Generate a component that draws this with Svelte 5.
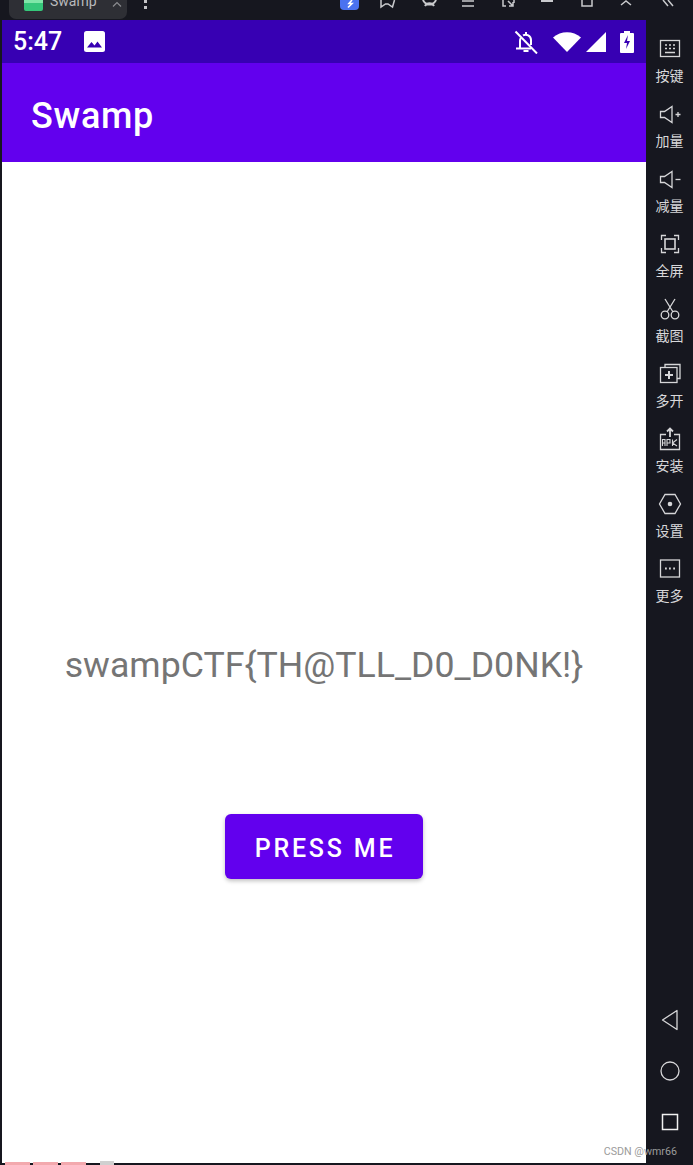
<script>
  const tools = [
    { label: '按键', icon: 'keys' },
    { label: '加量', icon: 'volup' },
    { label: '减量', icon: 'voldown' },
    { label: '全屏', icon: 'full' },
    { label: '截图', icon: 'cut' },
    { label: '多开', icon: 'multi' },
    { label: '安装', icon: 'apk' },
    { label: '设置', icon: 'gear' },
    { label: '更多', icon: 'more' }
  ];
</script>

<div class="emulator">
  <header class="titlebar">
    <div class="tab">
      <span class="tab-icon"></span>
      <span class="tab-name">Swamp</span>
      <svg class="tab-caret" width="10" height="6" viewBox="0 0 10 6"><path d="M1 5.5 5 1.5l4 4" fill="none" stroke="#8b8c90" stroke-width="1.2" /></svg>
    </div>
    <div class="kebab"><i></i><i></i></div>
    <svg class="window-controls" width="353" height="19" viewBox="340 0 353 19" fill="none" stroke="#c9cacd" stroke-width="1.5">
      <path d="M340 0h19v6a4 4 0 0 1-4 4h-11a4 4 0 0 1-4-4z" fill="#4a72f0" stroke="none" />
      <path d="M352 0l-3 3.500h3l-4 4" stroke="#fff" stroke-width="1.600" />
      <path d="M381 0v7l4.500-3h2.500l4.500 3 2-7" />
      <path d="M423 0a7 7 0 0 0 13 0M425 6a5 5 0 0 1 9 0" stroke-width="2" />
      <path d="M462 1h12M462 6h12" stroke-width="1.6" />
      <path d="M503 0v6h3M514 0v3M508 1l5 5M513 2v4h-4" />
      <path d="M541 1h12" stroke-width="2" />
      <path d="M582 0v6h10V0" />
      <path d="M621 5l5-4 5 4" />
      <path d="M668 0l5 6M663 0l5 6" />
    </svg>
  </header>

  <div class="body">
    <main class="phone">
      <div class="statusbar">
        <span class="clock">5:47</span>
        <svg class="pic" width="21" height="21" viewBox="0 0 21 21">
          <rect width="21" height="21" rx="2.5" fill="#fff" />
          <path d="M3 16.5 7.5 11l3 3.5 3-4 4.5 6z" fill="#3700b3" />
        </svg>
        <div class="sys-icons">
          <svg width="24" height="24" viewBox="0 0 24 24" fill="none" stroke="#fff" stroke-width="2">
            <path d="M2 18.500h15M6 18v-7a5 5 0 0 1 .800-3M9 5.300A5.500 5.500 0 0 1 17 10v5" />
            <path d="M9.500 21h5M12 2v2" />
            <path d="M1.500 1.500 23 23.500" />
          </svg>
          <svg class="wifi" width="28" height="20" viewBox="0 0 28 20"><path d="M0 5.500C8-1.500 20-1.500 28 5.500L14 20z" fill="#fff" /></svg>
          <svg class="cell" width="21" height="20" viewBox="0 0 21 20"><path d="M0 20 20 0v20z" fill="#fff" /></svg>
          <svg class="batt" width="14" height="22" viewBox="0 0 14 22">
            <path d="M4 0h6v2h3a1 1 0 0 1 1 1v18a1 1 0 0 1-1 1H1a1 1 0 0 1-1-1V3a1 1 0 0 1 1-1h3z" fill="#fff" />
            <path d="M8 4 4 12h3l-1 6 4-8H7z" fill="#3700b3" />
          </svg>
        </div>
      </div>

      <div class="appbar">Swamp</div>

      <div class="content">
        <p class="flag">swampCTF&#123;TH@TLL_D0_D0NK!&#125;</p>
        <button class="press" type="button">PRESS ME</button>
      </div>
    </main>

    <aside class="sidebar">
      <ul class="tools">
        {#each tools as tool}
          <li>
            <svg width="26" height="26" viewBox="0 0 26 26" fill="none" stroke="#d6d6d8" stroke-width="1.3">
              {#if tool.icon === 'keys'}
                <rect x="3.500" y="4.500" width="19" height="16" />
                <path d="M8 9h2M12 9h2M16 9h2M8 12.500h2M12 12.500h2M16 12.500h2M8 16.500h10" />
              {:else if tool.icon === 'volup'}
                <path d="M3.500 10.500v6h4l7.500 5V5.500l-7.500 5z" />
                <path d="M18.500 13.500h5M21 11v5" />
              {:else if tool.icon === 'voldown'}
                <path d="M3.500 10.500v6h4l7.500 5V5.500l-7.500 5z" />
                <path d="M18.500 13.500h5" />
              {:else if tool.icon === 'full'}
                <path d="M4.500 9V4.500H9M17 4.500h4.500V9M21.500 17v4.500H17M9 21.500H4.500V17" />
                <rect x="8" y="8" width="10" height="10" stroke-width="1.600" />
              {:else if tool.icon === 'cut'}
                <circle cx="8" cy="19" r="3.800" />
                <circle cx="18" cy="19" r="3.800" />
                <path d="M10 16 18 3M16 16 8 3" />
              {:else if tool.icon === 'multi'}
                <path d="M8 6.500V3.500h15v14h-3" />
                <rect x="3.500" y="6.500" width="16.500" height="15" />
                <path d="M8 14h8M12 10v8" stroke-width="2" />
              {:else if tool.icon === 'apk'}
                <path d="M9 8.500H3.500v15h19v-15H17" />
                <path d="M13 11V2.500M10 5.500l3-3 3 3" stroke-width="1.800" />
                <path d="M5.500 20v-6.500h2.500V20M5.500 17h2.500M10 20v-6.500h3v3.500h-3M15.500 13.500V20M20 13.500l-4.500 3.500 4.500 3" stroke-width="1.100" />
              {:else if tool.icon === 'gear'}
                <path d="M8 3.500h10l5.500 9.500L18 22.500H8L2.500 13z" />
                <circle cx="13" cy="13" r="2.300" fill="#d6d6d8" stroke="none" />
              {:else}
                <rect x="3.500" y="4" width="19" height="17" />
                <path d="M8 12.500h1.800M12 12.500h1.800M16.200 12.500H18" stroke-width="1.800" />
              {/if}
            </svg>
            <span>{tool.label}</span>
          </li>
        {/each}
      </ul>

      <nav class="softkeys">
        <svg width="20" height="22" viewBox="0 0 20 22" fill="none" stroke="#d6d6d8" stroke-width="1.300"><path d="M17 1.500v19L2.500 11z" stroke-linejoin="round" /></svg>
        <svg width="20" height="22" viewBox="0 0 20 22" fill="none" stroke="#d6d6d8" stroke-width="1.300"><circle cx="10" cy="11" r="9" /></svg>
        <svg width="20" height="22" viewBox="0 0 20 22" fill="none" stroke="#f0f0f0" stroke-width="1.500"><rect x="2.500" y="3.500" width="15" height="15" /></svg>
      </nav>
    </aside>
  </div>

  <div class="taskbar-scrap"><i></i><i></i><i></i><b></b></div>
  <span class="watermark">CSDN @wmr66</span>
</div>

<style>
  :global(body) {
    margin: 0;
    background: #16171f;
  }

  .emulator {
    position: relative;
    width: 693px;
    height: 1165px;
    overflow: hidden;
    display: flex;
    flex-direction: column;
    background: #16171f;
    font-family: Roboto, "Liberation Sans", sans-serif;
  }

  .titlebar {
    height: 20px;
    flex: none;
    display: flex;
    align-items: flex-start;
    overflow: hidden;
  }

  .tab {
    width: 120px;
    height: 19px;
    margin-left: 9px;
    padding-left: 15px;
    box-sizing: border-box;
    display: flex;
    gap: 7px;
    background: #2e2f35;
    border-radius: 0 0 7px 7px;
    overflow: hidden;
  }

  .tab-icon {
    width: 19px;
    height: 11px;
    flex: none;
    border-radius: 0 0 2px 2px;
    background: linear-gradient(#7fe6a8 0 3px, #35c77a 3px);
  }

  .tab-name {
    margin-top: -8px;
    font-size: 14px;
    line-height: 18px;
    color: #b9babd;
  }

  .tab-caret {
    margin: 1px 0 0 8px;
  }

  .kebab {
    width: 3px;
    margin-left: 17px;
    display: flex;
    flex-direction: column;
    gap: 3px;
  }

  .kebab i {
    width: 3px;
    height: 3px;
    background: #c4c4c6;
  }

  .window-controls {
    margin-left: 193px;
    flex: none;
  }

  .body {
    flex: 1;
    min-height: 0;
    display: flex;
    padding: 0 0 2px 2px;
  }

  .phone {
    width: 644px;
    flex: none;
    display: flex;
    flex-direction: column;
    background: #fff;
  }

  .statusbar {
    height: 43px;
    flex: none;
    display: flex;
    align-items: center;
    padding: 0 12px 0 11px;
    box-sizing: border-box;
    background: #3700b3;
    color: #fff;
  }

  .clock {
    font-size: 25px;
    font-weight: 500;
    line-height: 1;
  }

  .pic {
    margin-left: 22px;
  }

  .sys-icons {
    margin-left: auto;
    display: flex;
    align-items: center;
  }

  .wifi {
    margin-left: 15px;
  }

  .cell {
    margin-left: 5px;
  }

  .batt {
    margin-left: 13px;
  }

  .appbar {
    height: 99px;
    flex: none;
    display: flex;
    align-items: center;
    padding: 7px 0 0 29px;
    box-sizing: border-box;
    background: #6200ee;
    color: #fff;
    font-size: 36px;
    font-weight: 500;
    letter-spacing: 0.7px;
  }

  .content {
    flex: 1;
    display: flex;
    flex-direction: column;
    align-items: center;
    padding-top: 481px;
  }

  .flag {
    margin: 0;
    font-size: 35.7px;
    line-height: 44px;
    color: #757575;
    white-space: nowrap;
  }

  .press {
    width: 198px;
    height: 65px;
    margin-top: 127px;
    padding: 3px 0 0 2px;
    border: none;
    border-radius: 6px;
    background: #6200ee;
    color: #fff;
    font-family: inherit;
    font-size: 25px;
    font-weight: 500;
    letter-spacing: 2.8px;
    box-shadow: 0 2px 4px rgba(0, 0, 0, 0.25);
  }

  .sidebar {
    flex: 1;
    display: flex;
    flex-direction: column;
    align-items: center;
  }

  .tools {
    list-style: none;
    margin: 16px 0 0;
    padding: 0;
    display: flex;
    flex-direction: column;
    gap: 12px;
  }

  .tools li {
    display: flex;
    flex-direction: column;
    align-items: center;
    height: 53px;
  }

  .tools span {
    margin-top: 4px;
    font-family: "Noto Sans CJK SC", sans-serif;
    font-size: 14px;
    line-height: 19px;
    color: #d8d8da;
  }

  .softkeys {
    margin-top: auto;
    margin-bottom: 30px;
    display: flex;
    flex-direction: column;
    gap: 29px;
  }

  .softkeys svg {
    display: block;
  }

  .taskbar-scrap {
    position: absolute;
    left: 5px;
    bottom: 0;
    display: flex;
    gap: 3px;
    align-items: flex-end;
  }

  .taskbar-scrap i {
    width: 25px;
    height: 3px;
    background: #f3a9ae;
  }

  .taskbar-scrap b {
    width: 14px;
    height: 4px;
    margin-left: 11px;
    background: #d0d0d0;
  }

  .watermark {
    position: absolute;
    right: 16px;
    bottom: 6px;
    font-size: 10.7px;
    line-height: 14px;
    color: #9b9b9b;
  }
</style>
